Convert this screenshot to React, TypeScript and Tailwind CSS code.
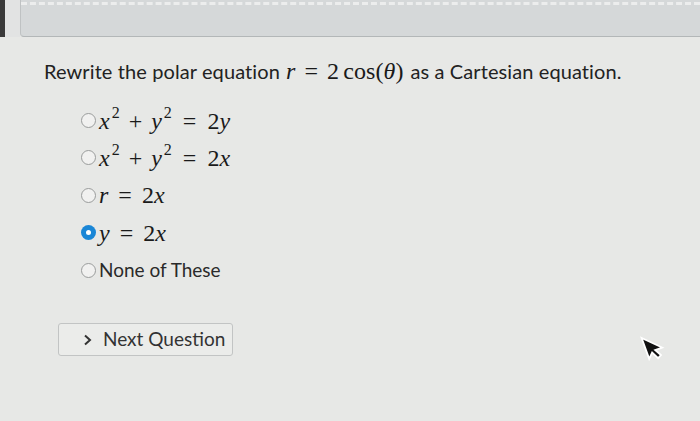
import React from "react";

function Radio({ checked }: { checked?: boolean }) {
  if (checked) {
    return (
      <span className="w-[15px] h-[15px] rounded-full bg-[#1a86d6] flex items-center justify-center shrink-0">
        <span className="w-[5px] h-[5px] rounded-full bg-white" />
      </span>
    );
  }
  return <span className="w-[15px] h-[15px] rounded-full border border-[#9a9c9c] bg-[#f1f1f0] shrink-0" />;
}

function Sup() {
  return <span className="inline-block text-[16px] not-italic relative top-[-11px] ml-[2px]">2</span>;
}

export default function App() {
  const math = "font-['Liberation_Serif',serif] text-[24px] text-[#1a1a1a] leading-none";
  return (
    <div className="w-[700px] h-[421px] bg-[#e7e8e6] relative overflow-hidden font-['Lato',sans-serif] text-[#222]">
      <div className="flex h-[37px]">
        <div className="w-[5px] bg-[#3a3a3a]" />
        <div className="w-[15px] bg-[#e2e3e3]" />
        <div className="flex-1 bg-[#d5d8d9] border-l border-l-[#bfc2c3] border-b border-b-[#b3b7b8] rounded-bl-[4px] flex flex-col">
          <div className="h-[3px] mt-[2px] border-t-[3px] border-dashed border-[#eceded]" />
        </div>
      </div>
      <div className="pl-[44px] pt-[19px]">
        <div className="text-[20px] flex items-baseline tracking-[0.1px] h-[26px]">
          <span>Rewrite the polar equation</span>
          <span className={math + " ml-[6px]"}>
            <i>r</i><span className="mx-[9px]">=</span>2<span className="ml-[4px]">cos</span>(<i>θ</i>)
          </span>
          <span className="ml-[7px]">as a Cartesian equation.</span>
        </div>
        <div className="ml-[37px] mt-[27px] flex flex-col gap-[14px]">
          <div className="flex items-center gap-[3px] h-[23px]">
            <Radio />
            <span className={math}>
              <i>x</i><Sup /><span className="mx-[9px]">+</span><i>y</i><Sup /><span className="mx-[11px]">=</span>2<i>y</i>
            </span>
          </div>
          <div className="flex items-center gap-[3px] h-[23px]">
            <Radio />
            <span className={math}>
              <i>x</i><Sup /><span className="mx-[9px]">+</span><i>y</i><Sup /><span className="mx-[11px]">=</span>2<i>x</i>
            </span>
          </div>
          <div className="flex items-center gap-[3px] h-[24px]">
            <Radio />
            <span className={math}>
              <i>r</i><span className="mx-[10px]">=</span>2<i>x</i>
            </span>
          </div>
          <div className="flex items-center gap-[3px] h-[23px]">
            <Radio checked />
            <span className={math}>
              <i>y</i><span className="mx-[10px]">=</span>2<i>x</i>
            </span>
          </div>
          <div className="flex items-center gap-[3px] h-[24px]">
            <Radio />
            <span className="text-[19px] text-[#2a2a2a]">None of These</span>
          </div>
        </div>
        <div className="ml-[14px] mt-[41px] w-[175px] h-[33px] border border-[#c2c4c4] rounded-[3px] bg-[#ebecea] flex items-center pl-[24px] gap-[10px] text-[19px] text-[#333]">
          <svg width="10" height="12" viewBox="0 0 10 12"><path d="M2 1.5 L7 6 L2 10.5" fill="none" stroke="#333" strokeWidth="2" /></svg>
          <span>Next Question</span>
        </div>
      </div>
      <svg className="absolute left-[638px] top-[330px]" width="32" height="34" viewBox="0 0 26 26">
        <path d="M6 3 L6 21 L10 17 L13 23 L16 21.5 L13 16 L19 16 Z" fill="#111" stroke="#fff" strokeWidth="1.5" transform="rotate(-20 12 13)" />
      </svg>
    </div>
  );
}
